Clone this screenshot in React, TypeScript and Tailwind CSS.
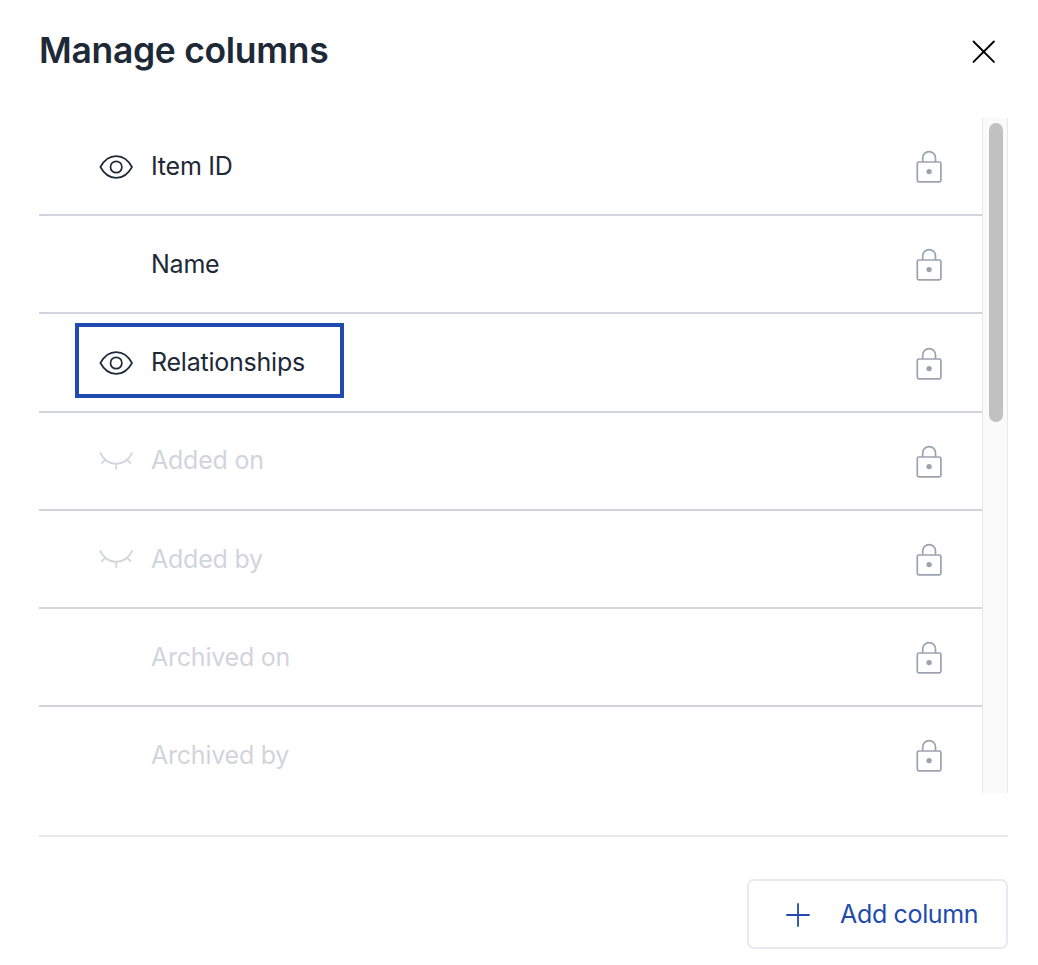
import { useState } from "react";

type Column = {
  name: string;
  hidden?: boolean;
  icon?: "open" | "closed";
  highlighted?: boolean;
};

const COLUMNS: Column[] = [
  { name: "Item ID", icon: "open" },
  { name: "Name" },
  { name: "Relationships", icon: "open", highlighted: true },
  { name: "Added on", icon: "closed", hidden: true },
  { name: "Added by", icon: "closed", hidden: true },
  { name: "Archived on", hidden: true },
  { name: "Archived by", hidden: true },
];

function EyeIcon() {
  return (
    <svg width="34" height="26" viewBox="0 0 34 26" fill="none" stroke="currentColor" strokeWidth="1.7" strokeLinejoin="round" aria-hidden="true">
      <path d="M1.400 13C5.200 6 10.700 2.100 17.200 2.100S29.200 6 33 13C29.200 20 23.700 23.900 17.200 23.900S5.200 20 1.400 13Z" />
      <circle cx="17.200" cy="13" r="5.700" />
    </svg>
  );
}

function EyeClosedIcon() {
  return (
    <svg width="34" height="26" viewBox="0 0 34 26" fill="none" stroke="currentColor" strokeWidth="1.7" aria-hidden="true">
      <path d="M1 4.500C4.700 12 10.200 15.800 17.200 15.800S29.700 12 33.400 4.500" />
      <path d="M17.200 15.800V21.800M6.400 11.700L2.400 15.600M28 11.700L32 15.600" />
    </svg>
  );
}

function LockIcon() {
  return (
    <svg width="26" height="34" viewBox="0 0 26 34" fill="none" stroke="currentColor" strokeWidth="1.7" aria-hidden="true">
      <rect x="1.300" y="12" width="23.600" height="19.800" rx="1.500" />
      <path d="M6.700 12V8a6.400 6.400 0 0 1 12.800 0v4" />
      <circle cx="13.100" cy="21.600" r="2.700" fill="currentColor" stroke="none" />
    </svg>
  );
}

function ColumnRow({ column }: { column: Column }) {
  return (
    <li className="h-[98.2px] shrink-0 flex items-center justify-between border-b-2 border-[#d1d5dc] pl-9 pr-[40px]">
      <div
        className={`h-[75px] -mt-[3px] flex items-center border-4 pt-1 pl-[20px] pr-[35px] ${
          column.highlighted ? "border-[#1e4bad]" : "border-transparent"
        } ${column.hidden ? "text-[#d1d5db]" : "text-[#1e2938]"}`}
      >
        <span className="w-[34px] mr-[18px]">
          {column.icon === "open" && <EyeIcon />}
          {column.icon === "closed" && <EyeClosedIcon />}
        </span>
        <span className="pb-[1.4px] text-[25px] leading-8 tracking-[-0.23px] whitespace-nowrap">{column.name}</span>
      </div>
      <span className="pt-[2.4px] text-[#9ca3af]"><LockIcon /></span>
    </li>
  );
}

export default function App() {
  const [open, setOpen] = useState(true);
  if (!open) return null;

  return (
    <div className="w-[1038px] h-[965px] flex flex-col bg-white pl-[39px] pr-[30px] overflow-hidden font-['Inter',sans-serif]">
      <header className="h-[118px] shrink-0 flex items-start justify-between pt-[29px] pr-[12px]">
        <h1 className="text-[35.5px] leading-[43px] font-semibold tracking-[-0.32px] text-[#1e2938]">Manage columns</h1>
        <button type="button" aria-label="Close" onClick={() => setOpen(false)} className="mt-[11px] cursor-pointer">
          <svg width="24" height="24" viewBox="0 0 24 24" stroke="#000" strokeWidth="1.9" strokeLinecap="round">
            <path d="M1.500 1.500L21.900 21.900M21.900 1.500L1.500 21.900" />
          </svg>
        </button>
      </header>

      <div className="h-[675px] shrink-0 flex">
        <ul className="flex-1 h-full flex flex-col overflow-hidden">
          {COLUMNS.map((column) => (
            <ColumnRow key={column.name} column={column} />
          ))}
        </ul>
        <div className="w-[26px] h-full border-x border-[#e8e8e8] bg-[#fafafa] pt-[5px] pl-[6px]">
          <div className="w-[14px] h-[299px] rounded-full bg-[#c1c1c1]" />
        </div>
      </div>

      <footer className="mt-[42px] flex justify-end border-t-2 border-[#e9eaf0] pt-[42px]">
        <button
          type="button"
          className="w-[261px] h-[70px] flex items-center rounded-[7px] border-2 border-[#e9eaf0] pl-[37px] text-[25px] text-[#1e4bad] cursor-pointer"
        >
          <svg width="24" height="24" viewBox="0 0 24 24" stroke="currentColor" strokeWidth="1.8" className="mt-[2px]" aria-hidden="true">
            <path d="M12 .300V23.700M.300 12H23.700" />
          </svg>
          <span className="ml-[30px] pt-[2px] tracking-[-0.34px] whitespace-nowrap">Add column</span>
        </button>
      </footer>
    </div>
  );
}
